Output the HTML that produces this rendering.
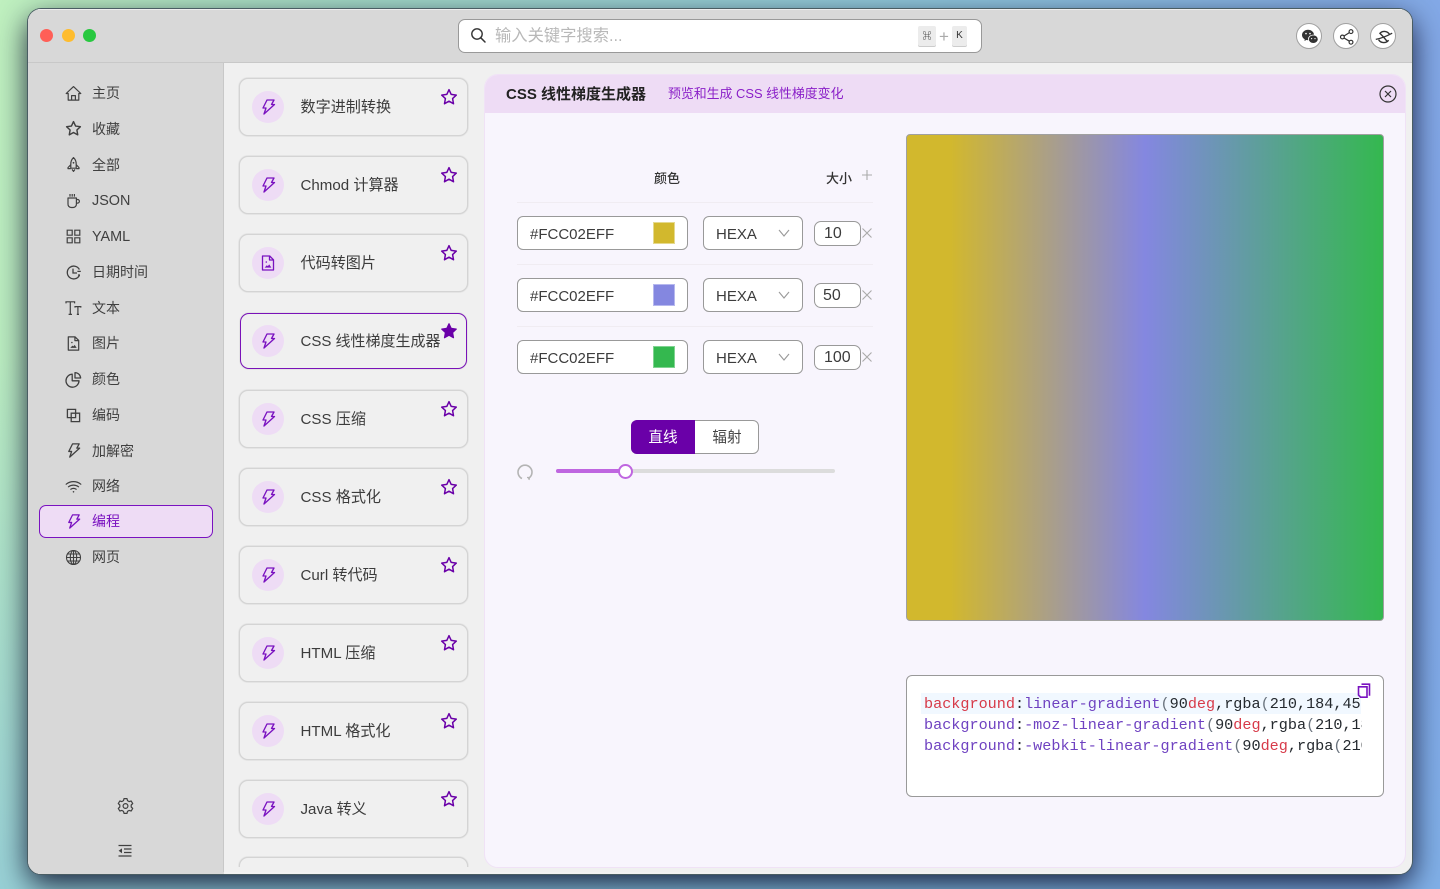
<!DOCTYPE html>
<html lang="zh">
<head>
<meta charset="utf-8">
<title>CSS 线性梯度生成器</title>
<style>
*{box-sizing:border-box;margin:0;padding:0}
html,body{width:1440px;height:889px;overflow:hidden}
body{position:relative;font-family:"Liberation Sans","Noto Sans CJK SC",sans-serif;color:#3c3c3c;background:linear-gradient(100deg,#bff0bf 0%,#a5dcc8 22%,#90c8dc 58%,#7f9fea 100%)}
.a{position:absolute}
.bgb{left:0;top:0;width:1440px;height:889px;background:linear-gradient(180deg,rgba(160,220,230,0) 40%,rgba(130,190,230,.55) 100%)}
.win{left:28px;top:9px;width:1384px;height:865px;border-radius:13px;background:#f0f0f0;overflow:hidden}
.shadow{left:28px;top:9px;width:1384px;height:865px;border-radius:13px;box-shadow:0 0 0 1px #4a5d63,0 10px 30px rgba(0,0,30,.85)}
.top{left:0;top:0;width:1384px;height:54px;background:#d8d8d8;border-bottom:1px solid #c8c8c8}
.hl{left:0;top:0;width:1384px;height:1px;background:#eee}
.side{left:0;top:54px;width:196px;height:811px;background:#d8d8d8;border-right:1.5px solid #c8c8c8}
.dot{width:13px;height:13px;border-radius:50%;top:20px}
.nav{left:11px;width:174px;height:32px;font-size:14px;line-height:33px;padding-left:53px;white-space:nowrap;color:#3f3f3f}
.nav svg{position:absolute;left:26px;top:7.5px}
.nav.on{background:#eedcf5;border:1px solid #7a12c0;border-radius:7px;color:#7a12c0;line-height:31px;padding-left:52px}
.nav.on svg{left:25px;top:6.5px}
.card{left:211px;width:229px;height:58px;background:#f0f0f0;border:1px solid #d4d4d4;border-radius:9px;box-shadow:0 0 1.5px rgba(0,0,0,.2);font-size:15.1px;line-height:58px;padding-left:60.5px;white-space:nowrap;color:#3c3c3c}
.card.on{border:1.5px solid #7a12b8;left:212px;width:227px;height:56px;line-height:55px;padding-left:59.5px;font-size:15px}
.ci{position:absolute;left:12px;top:12px;width:32px;height:32px;border-radius:50%;background:#eedcf5}
.card.on .ci{left:11px;top:10.5px}
.ci svg{position:absolute;left:7px;top:7px}
.star{position:absolute;left:200px;top:9px}
.card.on .star{left:199px;top:8px}
.panel{left:456px;top:65px;width:922px;height:794px;border-radius:14px;background:#f8f5fd;border:1.5px solid #f0e2f6;overflow:hidden}
.phead{left:-1px;top:-1px;width:922px;height:39px;background:#eedcf5}
.box{background:#fff;border:1px solid #999;border-radius:6px;font-size:15px;color:#3c3c3c;white-space:nowrap}
.circ{width:26px;height:26px;border-radius:50%;background:#fff;border:1px solid #a0a0a0;top:14px}
.circ svg{position:absolute;left:4px;top:4px}
.div{left:489px;width:356px;height:1px;background:#f0ecf2}
.code{font-family:"Liberation Mono",monospace;font-size:15.17px;line-height:21px;white-space:pre;color:#6f42c1}
.r{color:#d73a49}.k{color:#24292e}.g{color:#6a737d}
.kb{background:#ececec;border-radius:2px;box-shadow:0 1px 0 #ccc;font-size:9px;font-weight:700;text-align:center;color:#333;top:17px;height:20px;line-height:20px}
</style>
</head>
<body>
<svg width="0" height="0" style="position:absolute">
<defs>
<symbol id="bolt" viewBox="0 0 18 18"><path d="M8 2h7l-2.5 4.5h3L5 16l2-6H4z" fill="none" stroke="currentColor" stroke-width="1.35" stroke-linejoin="round"/></symbol>
<symbol id="star" viewBox="0 0 18 18"><path d="M9 1.7l2.2 4.7 5.1.7-3.7 3.5.9 5.1L9 13.2l-4.5 2.5.9-5.1-3.7-3.5 5.1-.7z" fill="none" stroke="currentColor" stroke-width="1.5" stroke-linejoin="round"/></symbol>
<symbol id="file" viewBox="0 0 18 18"><path d="M3.5 2h7.2L14.5 5.8V16h-11zM10.5 2v4h4" fill="none" stroke="currentColor" stroke-width="1.3" stroke-linejoin="round"/><path d="M5.6 13.6h6.8L10.2 10.4 8.9 12.1 7.8 11.2z" fill="currentColor"/><circle cx="7.3" cy="8" r=".8" fill="currentColor"/></symbol>
</defs>
</svg>
<div class="a bgb"></div>
<div class="a shadow"></div>
<div class="a win">
  <div class="a side"></div>
  <div class="a top"><div class="a hl"></div></div>
  <div class="a dot" style="left:12px;background:#ff5f57"></div>
  <div class="a dot" style="left:34px;background:#febc2e"></div>
  <div class="a dot" style="left:55px;background:#28c840"></div>

  <div class="a box" style="left:430px;top:10px;width:524px;height:34px;border-radius:7px"></div>
  <svg class="a" style="left:441px;top:17px" width="18" height="18" viewBox="0 0 18 18"><circle cx="8" cy="8" r="5.2" fill="none" stroke="#333" stroke-width="1.4"/><path d="M11.8 11.8 16 16" stroke="#333" stroke-width="1.5" stroke-linecap="round"/></svg>
  <div class="a" style="left:467px;top:15px;font-size:16.3px;line-height:25px;color:#b8b8b8;white-space:nowrap">输入关键字搜索...</div>
  <div class="a kb" style="left:890px;width:18px">⌘</div>
  <div class="a" style="left:911px;top:16px;font-size:17px;line-height:23px;color:#aaa">+</div>
  <div class="a kb" style="left:924px;width:15px;font-size:10px;font-weight:400">K</div>

  <div class="a circ" style="left:1268px"><svg width="18" height="18" viewBox="0 0 18 18"><ellipse cx="7" cy="7" rx="6" ry="5.2" fill="#333"/><path d="M3.8 10.5 3.5 13l2.6-1.5z" fill="#333"/><ellipse cx="12.3" cy="11.2" rx="4.9" ry="4.2" fill="#333" stroke="#fff" stroke-width=".8"/><circle cx="5" cy="5.6" r=".8" fill="#fff"/><circle cx="9" cy="5.6" r=".8" fill="#fff"/><circle cx="10.6" cy="10.6" r=".6" fill="#fff"/><circle cx="14" cy="10.6" r=".6" fill="#fff"/></svg></div>
  <div class="a circ" style="left:1305px"><svg width="18" height="18" viewBox="0 0 18 18" fill="none" stroke="#333" stroke-width="1.2"><circle cx="13" cy="3.6" r="1.9"/><circle cx="13" cy="14.2" r="1.9"/><circle cx="4.4" cy="9" r="1.9"/><path d="M6 8 11.4 4.6M6 10 11.4 13.2"/></svg></div>
  <div class="a circ" style="left:1342px"><svg width="18" height="18" viewBox="0 0 18 18" fill="none" stroke="#333" stroke-width="1.4"><path d="M4.5 5.8A6 6 0 0 1 14.6 6.6M13.6 12.2A6 6 0 0 1 3.6 11.6"/><path d="M.8 11.4C5 10.6 12 8 17.2 5.2" stroke-width="1.2"/><path d="M5 5.4 8.5 9l3.5 4.2"/></svg></div>

  <!-- nav -->
  <div class="a nav" style="top:68px"><svg width="17" height="17" viewBox="0 0 17 17" fill="none" stroke="#404040" stroke-width="1.2" stroke-linejoin="round"><path d="M1.2 8.5 8.5 1.6l7.3 6.9h-2v6.6H3.2V8.5zM6.6 15v-4.4h3.8V15"/></svg>主页</div>
  <div class="a nav" style="top:104px"><svg width="17" height="17" viewBox="0 0 18 18" style="color:#404040;top:6.5px"><use href="#star"/></svg>收藏</div>
  <div class="a nav" style="top:140px"><svg width="17" height="17" viewBox="0 0 17 17" style="top:6.5px" fill="none" stroke="#404040" stroke-width="1.2" stroke-linejoin="round"><path d="M8.5 1.6C10.5 3.6 11.4 6 11.2 8.6v3.6H5.8V8.6C5.6 6 6.5 3.6 8.5 1.6zM5.8 8.6 3 11.6v1h2.8M11.2 8.6l2.8 3v1h-2.8M7 13.4l1.5 2 1.5-2"/><circle cx="8.5" cy="6.8" r=".9" fill="#404040" stroke="none"/></svg>全部</div>
  <div class="a nav" style="top:176px;font-size:14.4px"><svg width="17" height="17" viewBox="0 0 17 17" style="top:6.5px" fill="none" stroke="#404040" stroke-width="1.2" stroke-linejoin="round"><path d="M3 6h8.4v6a3.2 3.2 0 0 1-3.2 3.5H6.2A3.2 3.2 0 0 1 3 12zM11.4 7.5h1.2a1.8 1.8 0 0 1 0 3.6h-1.2M5 2v2.6M7.2 2v2.6M9.4 2v2.6"/></svg>JSON</div>
  <div class="a nav" style="top:212px;font-size:14.4px"><svg width="17" height="17" viewBox="0 0 17 17" style="top:6.5px" fill="none" stroke="#404040" stroke-width="1.2"><path d="M2.2 2.2h5v5h-5zM9.8 2.2h5v5h-5zM2.2 9.8h5v5h-5zM9.8 9.8h5v5h-5z"/></svg>YAML</div>
  <div class="a nav" style="top:247px"><svg width="17" height="17" viewBox="0 0 17 17" fill="none" stroke="#404040" stroke-width="1.3"><path d="M14.4 5.6A6.4 6.4 0 1 0 14.4 11.4M8 4.6V9h4M12.4 7.4h3.4M13 11h2"/></svg>日期时间</div>
  <div class="a nav" style="top:283px"><svg width="17" height="17" viewBox="0 0 17 17" fill="none" stroke="#404040" stroke-width="1.2"><path d="M1 3.4V1.8h8.6v1.6M5.3 1.8v12.6M3.6 14.4h3.4M10 7.6V6.6h5.8v1M12.9 6.6v7.8M11.8 14.4h2.2"/></svg>文本</div>
  <div class="a nav" style="top:318px"><svg width="17" height="17" viewBox="0 0 18 18" style="color:#404040"><use href="#file"/></svg>图片</div>
  <div class="a nav" style="top:354px"><svg width="17" height="17" viewBox="0 0 17 17" fill="none" stroke="#404040" stroke-width="1.3" stroke-linejoin="round"><path d="M7.2 3.2A6.5 6.5 0 1 0 14 9.8H7.2zM10 1.6A5.6 5.6 0 0 1 15.6 7H10z"/></svg>颜色</div>
  <div class="a nav" style="top:390px"><svg width="17" height="17" viewBox="0 0 17 17" fill="none" stroke="#404040" stroke-width="1.3"><path d="M2.4 2.4h8.2v8.2H2.4zM6.2 6.2h8.4v8.4H6.2z"/></svg>编码</div>
  <div class="a nav" style="top:426px"><svg width="17" height="17" viewBox="0 0 18 18" style="color:#404040;top:6.5px"><use href="#bolt"/></svg>加解密</div>
  <div class="a nav" style="top:461px"><svg width="17" height="17" viewBox="0 0 17 17" fill="none" stroke="#404040" stroke-width="1.2" stroke-linecap="round"><path d="M1.2 6.2C5.4 2.8 11.6 2.8 15.8 6.2M3.4 8.8C6.4 6.6 10.6 6.6 13.6 8.8M5.8 11.2C7.4 10.2 9.6 10.2 11.2 11.2"/><circle cx="8.5" cy="13.8" r=".8" fill="#404040" stroke="none"/></svg>网络</div>
  <div class="a nav on" style="top:496px;height:33px"><svg width="17" height="17" viewBox="0 0 18 18" style="color:#7a12c0"><use href="#bolt"/></svg>编程</div>
  <div class="a nav" style="top:532px"><svg width="17" height="17" viewBox="0 0 17 17" fill="none" stroke="#404040" stroke-width="1.1"><circle cx="8.5" cy="8.5" r="7"/><ellipse cx="8.5" cy="8.5" rx="3.2" ry="7"/><path d="M1.5 8.5h14M2.4 5h12.2M2.4 12h12.2M8.5 1.5v14"/></svg>网页</div>

  <svg class="a" style="left:89px;top:788px" width="17" height="17" viewBox="0 0 17 17" fill="none" stroke="#404040" stroke-width="1.2" stroke-linejoin="round"><path d="M7 1.6h3l.5 2 1.7 1 2-.6 1.5 2.6-1.5 1.4v2l1.5 1.4-1.5 2.6-2-.6-1.7 1-.5 2H7l-.5-2-1.7-1-2 .6L1.3 11.4l1.5-1.4V8L1.3 6.6l1.5-2.6 2 .6 1.7-1z"/><circle cx="8.5" cy="9" r="2.4"/></svg>
  <svg class="a" style="left:89px;top:834px" width="16" height="16" viewBox="0 0 16 16" fill="none" stroke="#404040" stroke-width="1.2"><path d="M1.5 2.5h13M7 6h7.5M7 9.5h7.5M1.5 13h13"/><path d="M5 5.4v4.8L1.6 7.8z" fill="#404040" stroke="none"/></svg>

  <!-- cards -->
  <div class="a card" style="top:69px"><span class="ci" style="color:#7a12c0"><svg width="18" height="18"><use href="#bolt"/></svg></span>数字进制转换<svg class="star" width="18" height="18" style="color:#6a00a8"><use href="#star"/></svg></div>
  <div class="a card" style="top:147px"><span class="ci" style="color:#7a12c0"><svg width="18" height="18"><use href="#bolt"/></svg></span>Chmod 计算器<svg class="star" width="18" height="18" style="color:#6a00a8"><use href="#star"/></svg></div>
  <div class="a card" style="top:225px"><span class="ci" style="color:#7a12c0"><svg width="18" height="18"><use href="#file"/></svg></span>代码转图片<svg class="star" width="18" height="18" style="color:#6a00a8"><use href="#star"/></svg></div>
  <div class="a card on" style="top:304px"><span class="ci" style="color:#7a12c0"><svg width="18" height="18"><use href="#bolt"/></svg></span>CSS 线性梯度生成器<svg class="star" width="18" height="18" viewBox="0 0 18 18"><path d="M9 1.7l2.2 4.7 5.1.7-3.7 3.5.9 5.1L9 13.2l-4.5 2.5.9-5.1-3.7-3.5 5.1-.7z" fill="#6a00a8" stroke="#6a00a8" stroke-width="1.2" stroke-linejoin="round"/></svg></div>
  <div class="a card" style="top:381px"><span class="ci" style="color:#7a12c0"><svg width="18" height="18"><use href="#bolt"/></svg></span>CSS 压缩<svg class="star" width="18" height="18" style="color:#6a00a8"><use href="#star"/></svg></div>
  <div class="a card" style="top:459px"><span class="ci" style="color:#7a12c0"><svg width="18" height="18"><use href="#bolt"/></svg></span>CSS 格式化<svg class="star" width="18" height="18" style="color:#6a00a8"><use href="#star"/></svg></div>
  <div class="a card" style="top:537px"><span class="ci" style="color:#7a12c0"><svg width="18" height="18"><use href="#bolt"/></svg></span>Curl 转代码<svg class="star" width="18" height="18" style="color:#6a00a8"><use href="#star"/></svg></div>
  <div class="a card" style="top:615px"><span class="ci" style="color:#7a12c0"><svg width="18" height="18"><use href="#bolt"/></svg></span>HTML 压缩<svg class="star" width="18" height="18" style="color:#6a00a8"><use href="#star"/></svg></div>
  <div class="a card" style="top:693px"><span class="ci" style="color:#7a12c0"><svg width="18" height="18"><use href="#bolt"/></svg></span>HTML 格式化<svg class="star" width="18" height="18" style="color:#6a00a8"><use href="#star"/></svg></div>
  <div class="a card" style="top:771px"><span class="ci" style="color:#7a12c0"><svg width="18" height="18"><use href="#bolt"/></svg></span>Java 转义<svg class="star" width="18" height="18" style="color:#6a00a8"><use href="#star"/></svg></div>
  <div class="a card" style="top:848px;overflow:hidden"><svg class="star" width="18" height="18" style="color:#6a00a8"><use href="#star"/></svg></div>
  <div class="a" style="left:196px;top:858px;width:260px;height:7px;background:#f0f0f0"></div>
  <div class="a" style="left:0;top:863px;width:1384px;height:2px;background:#f2f2f2"></div>
  <div class="a" style="left:0;top:863px;width:196px;height:2px;background:#d8d8d8"></div>

  <!-- panel -->
  <div class="a panel">
    <div class="a phead"></div>
    <div class="a" style="left:21px;top:9px;font-size:15px;line-height:22px;font-weight:700;color:#222;white-space:nowrap">CSS 线性梯度生成器</div>
    <div class="a" style="left:183px;top:9px;font-size:12.9px;line-height:20px;color:#8a1fc8;white-space:nowrap">预览和生成 CSS 线性梯度变化</div>
    <svg class="a" style="left:893px;top:9px" width="20" height="20" viewBox="0 0 20 20" fill="none" stroke="#333" stroke-width="1.2"><circle cx="10" cy="10" r="8"/><path d="M7 7l6 6M13 7l-6 6"/></svg>
  </div>
  <div class="a" style="left:626px;top:160px;font-size:13px;line-height:20px;font-weight:500;color:#333">颜色</div>
  <div class="a" style="left:798px;top:160px;font-size:13px;line-height:20px;font-weight:500;color:#333">大小</div>
  <svg class="a" style="left:833px;top:160px" width="12" height="12" viewBox="0 0 12 12" stroke="#aaa" stroke-width="1.1"><path d="M6 1v10M1 6h10"/></svg>
  <div class="a div" style="top:193px"></div>
  <div class="a div" style="top:255px"></div>
  <div class="a div" style="top:317px"></div>

  <div class="a box" style="left:489px;top:207px;width:171px;height:34px;line-height:35px;padding-left:12px">#FCC02EFF</div>
  <div class="a" style="left:625px;top:213px;width:22px;height:22px;background:#d2b82d;border:1px solid #e5d98e"></div>
  <div class="a box" style="left:675px;top:207px;width:100px;height:34px;line-height:35px;padding-left:12px">HEXA</div>
  <svg class="a" style="left:750px;top:219px" width="12" height="10" viewBox="0 0 12 10" fill="none" stroke="#999" stroke-width="1.1"><path d="M1 2l5 6 5-6"/></svg>
  <div class="a box" style="left:786px;top:212px;width:47px;height:25px;line-height:24px;padding-left:9px;border-radius:7px;font-size:16px">10</div>
  <svg class="a" style="left:833px;top:218px" width="12" height="12" viewBox="0 0 12 12" stroke="#aaa" stroke-width="1.1"><path d="M1.5 1.5l9 9M10.5 1.5l-9 9"/></svg>

  <div class="a box" style="left:489px;top:269px;width:171px;height:34px;line-height:35px;padding-left:12px">#FCC02EFF</div>
  <div class="a" style="left:625px;top:275px;width:22px;height:22px;background:#8487e0;border:1px solid #b6b8ee"></div>
  <div class="a box" style="left:675px;top:269px;width:100px;height:34px;line-height:35px;padding-left:12px">HEXA</div>
  <svg class="a" style="left:750px;top:281px" width="12" height="10" viewBox="0 0 12 10" fill="none" stroke="#999" stroke-width="1.1"><path d="M1 2l5 6 5-6"/></svg>
  <div class="a box" style="left:786px;top:274px;width:47px;height:25px;line-height:24px;padding-left:8px;border-radius:7px;font-size:16px">50</div>
  <svg class="a" style="left:833px;top:280px" width="12" height="12" viewBox="0 0 12 12" stroke="#aaa" stroke-width="1.1"><path d="M1.5 1.5l9 9M10.5 1.5l-9 9"/></svg>

  <div class="a box" style="left:489px;top:331px;width:171px;height:34px;line-height:35px;padding-left:12px">#FCC02EFF</div>
  <div class="a" style="left:625px;top:337px;width:22px;height:22px;background:#34b84f;border:1px solid #7fd391"></div>
  <div class="a box" style="left:675px;top:331px;width:100px;height:34px;line-height:35px;padding-left:12px">HEXA</div>
  <svg class="a" style="left:750px;top:343px" width="12" height="10" viewBox="0 0 12 10" fill="none" stroke="#999" stroke-width="1.1"><path d="M1 2l5 6 5-6"/></svg>
  <div class="a box" style="left:786px;top:336px;width:47px;height:25px;line-height:24px;padding-left:9px;border-radius:7px;font-size:16px">100</div>
  <svg class="a" style="left:833px;top:342px" width="12" height="12" viewBox="0 0 12 12" stroke="#aaa" stroke-width="1.1"><path d="M1.5 1.5l9 9M10.5 1.5l-9 9"/></svg>

  <div class="a" style="left:603px;top:411px;width:128px;height:34px;background:#fff;border:1px solid #999;border-radius:6px"></div>
  <div class="a" style="left:603px;top:411px;width:64px;height:34px;background:#6a00a8;border-radius:6px 0 0 6px;color:#fff;font-size:14.6px;line-height:36px;text-align:center">直线</div>
  <div class="a" style="left:667px;top:411px;width:64px;height:34px;color:#444;font-size:14.6px;line-height:36px;text-align:center">辐射</div>
  <svg class="a" style="left:488px;top:454px" width="18" height="18" viewBox="0 0 18 18" fill="none" stroke="#b4b4b4" stroke-width="1.6"><path d="M12 15.5A7 7 0 1 0 6 15.5"/><path d="M11 14.5l2.5 0-.5 2.5" stroke-width="1.2"/></svg>
  <div class="a" style="left:528px;top:460px;width:279px;height:4px;border-radius:2px;background:#dcdcdc"></div>
  <div class="a" style="left:528px;top:460px;width:70px;height:4px;border-radius:2px;background:#bf66e0"></div>
  <div class="a" style="left:590px;top:455px;width:15px;height:15px;border-radius:50%;background:#fff;border:2px solid #bf66e0"></div>

  <div class="a" style="left:878px;top:125px;width:478px;height:487px;border:1px solid #a0a0a0;border-radius:4px;background:linear-gradient(90deg,#d2b82d 9%,#8487e0 50%,#34b84f 100%)"></div>

  <div class="a box" style="left:878px;top:666px;width:478px;height:122px"></div>
  <div class="a" style="left:893px;top:684px;width:440px;height:21px;background:#f1f8ff"></div>
  <div class="a code" style="left:896px;top:685px;width:437.5px;height:63px;overflow:hidden"><span class="r">background</span><span class="k">:</span>linear-gradient<span class="g">(</span><span class="k">90</span><span class="r">deg</span><span class="k">,rgba</span><span class="g">(</span><span class="k">210,184,45,1) 10%,rgba(132,135,224,1) 50%)</span>
background<span class="k">:</span>-moz-linear-gradient<span class="g">(</span><span class="k">90</span><span class="r">deg</span><span class="k">,rgba</span><span class="g">(</span><span class="k">210,184,45,1) 10%)</span>
background<span class="k">:</span>-webkit-linear-gradient<span class="g">(</span><span class="k">90</span><span class="r">deg</span><span class="k">,rgba</span><span class="g">(</span><span class="k">210,184,45,1))</span></div>
  <svg class="a" style="left:1329px;top:674px" width="14" height="17" viewBox="0 0 14 17" fill="none" stroke="#7a12c0" stroke-width="1.6"><path d="M4.5 1.2h8v11.5"/><path d="M1.5 3.8h8.5v10.4H3.6L1.5 12z"/></svg>
</div>
</body>
</html>
